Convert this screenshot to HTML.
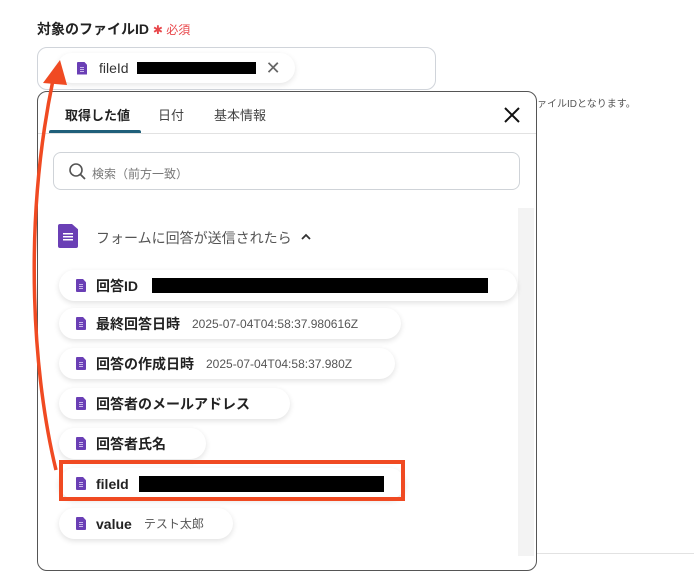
<!DOCTYPE html>
<html><head><meta charset="utf-8"><style>
*{box-sizing:border-box;margin:0;padding:0}
body{width:694px;height:556px;overflow:hidden;background:#fff;font-family:"Liberation Sans","Noto Sans CJK JP",sans-serif;position:relative;color:#222}
.abs{position:absolute}
.chip{position:absolute;left:59px;height:31px;background:#fff;border-radius:16px;box-shadow:0 2px 6px rgba(0,0,0,.12);display:flex;align-items:center;padding-left:17px;font-size:14px;font-weight:bold;color:#222;white-space:nowrap}
.chip .ic{margin-right:10px}
.chip .v{font-weight:normal;color:#555;font-size:12px;margin-left:12px}
.ic{display:inline-block;width:10px;height:13px;background:#6a3fb5;border-radius:1px;position:relative;clip-path:polygon(0 0,70% 0,100% 25%,100% 100%,0 100%)}
.ic::after{content:"";position:absolute;left:3px;top:5px;width:4px;height:5px;background:repeating-linear-gradient(#c9b8ea 0 1px,transparent 1px 2px)}
.blk{display:inline-block;background:#000;height:15px}
</style></head><body>
<div class="abs" style="left:37px;top:19px;font-size:14px;font-weight:bold;color:#222">対象のファイルID <span style="color:#e8474b;font-weight:normal;font-size:12px">✱ 必須</span></div>
<div class="abs" style="left:37px;top:47px;width:399px;height:43px;border:1px solid #d0d4da;border-radius:10px"></div>
<div class="abs" style="left:57px;top:53px;width:238px;height:30px;background:#fff;border-radius:15px;box-shadow:0 2px 6px rgba(0,0,0,.1);display:flex;align-items:center;padding-left:20px;font-size:14px;color:#333">
<span class="ic" style="margin-right:12px"></span>fileId<span class="blk" style="width:119px;height:12px;margin-left:8px"></span><span style="margin-left:10px;font-size:18px;color:#666">✕</span></div>
<div class="abs" style="left:537px;top:95px;font-size:10px;color:#555">ァイルIDとなります。</div>
<div class="abs" style="left:537px;top:553px;width:157px;height:1px;background:#e2e2e2"></div>
<div class="abs" style="left:37px;top:91px;width:500px;height:480px;border:1px solid #555;border-radius:10px;background:#fff"></div>
<div class="abs" style="left:65px;top:105px;font-size:13px;font-weight:bold;color:#222">取得した値</div>
<div class="abs" style="left:158px;top:105px;font-size:13px;color:#444">日付</div>
<div class="abs" style="left:214px;top:105px;font-size:13px;color:#444">基本情報</div>
<div class="abs" style="left:49px;top:130px;width:92px;height:4px;background:#1f5f7a;border-radius:2px 2px 0 0"></div>
<div class="abs" style="left:38px;top:133px;width:498px;height:1px;background:#e2e2e2"></div>
<svg class="abs" style="left:503px;top:106px" width="18" height="18"><path d="M2 2L16 16M16 2L2 16" stroke="#111" stroke-width="2"/></svg>
<div class="abs" style="left:53px;top:152px;width:467px;height:38px;border:1px solid #cfd3d8;border-radius:8px"></div>
<svg class="abs" style="left:68px;top:162px" width="20" height="20"><circle cx="8" cy="8" r="6" fill="none" stroke="#555" stroke-width="1.6"/><path d="M12.5 12.5L17 17" stroke="#555" stroke-width="1.8"/></svg>
<div class="abs" style="left:92px;top:165px;font-size:12px;color:#777">検索（前方一致）</div>
<div class="abs" style="left:518px;top:208px;width:16px;height:348px;background:#f3f3f3"></div>
<div class="abs" style="left:58px;top:224px;width:20px;height:24px;background:#6a3fb5;border-radius:2px;clip-path:polygon(0 0,70% 0,100% 22%,100% 100%,0 100%)"></div>
<div class="abs" style="left:63px;top:233px;width:10px;height:8px;background:repeating-linear-gradient(#fff 0 1.5px,transparent 1.5px 3px)"></div>
<div class="abs" style="left:96px;top:228px;font-size:14px;color:#555">フォームに回答が送信されたら</div>
<svg class="abs" style="left:300px;top:232px" width="12" height="10"><path d="M2 7L6 3L10 7" fill="none" stroke="#333" stroke-width="1.8"/></svg>
<div class="chip" style="top:270px;width:458px"><span class="ic"></span>回答ID<span class="blk" style="width:336px;margin-left:14px"></span></div>
<div class="chip" style="top:308px;width:342px"><span class="ic"></span>最終回答日時<span class="v">2025-07-04T04:58:37.980616Z</span></div>
<div class="chip" style="top:348px;width:336px"><span class="ic"></span>回答の作成日時<span class="v">2025-07-04T04:58:37.980Z</span></div>
<div class="chip" style="top:388px;width:231px"><span class="ic"></span>回答者のメールアドレス</div>
<div class="chip" style="top:428px;width:147px"><span class="ic"></span>回答者氏名</div>
<div class="chip" style="top:468px;width:346px"><span class="ic"></span>fileId<span class="blk" style="width:245px;margin-left:10px;height:16px"></span></div>
<div class="abs" style="left:59px;top:460px;width:346px;height:41px;border:4px solid #f04a22"></div>
<div class="chip" style="top:508px;width:174px"><span class="ic"></span>value<span class="v">テスト太郎</span></div>
<svg class="abs" style="left:0;top:0" width="694" height="556"><path d="M56 470 C34 380 22 230 53 80" fill="none" stroke="#f04a22" stroke-width="3.5"/><path d="M60 60 L43 83 L67 85 Z" fill="#f04a22"/></svg>
</body></html>
